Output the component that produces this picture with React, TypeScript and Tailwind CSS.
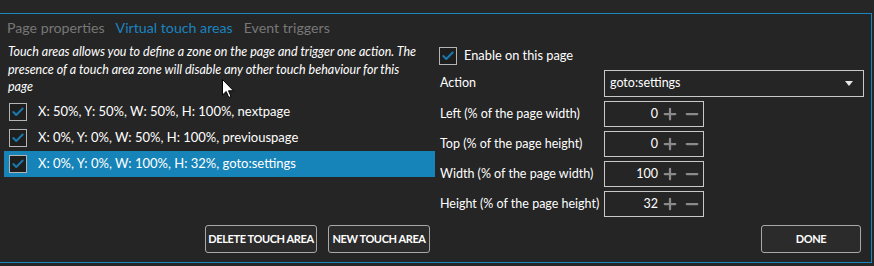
import { Check, Plus, Minus } from 'lucide-react';

const areas = [
  { label: 'X: 50%, Y: 50%, W: 50%, H: 100%, nextpage', selected: false },
  { label: 'X: 0%, Y: 0%, W: 50%, H: 100%, previouspage', selected: false },
  { label: 'X: 0%, Y: 0%, W: 100%, H: 32%, goto:settings', selected: true },
];

const fields = [
  { label: 'Left (% of the page width)', value: '0' },
  { label: 'Top (% of the page height)', value: '0' },
  { label: 'Width (% of the page width)', value: '100' },
  { label: 'Height (% of the page height)', value: '32' },
];

function CheckBox() {
  return (
    <span className="flex h-[18px] w-[18px] shrink-0 items-center justify-center border border-[#b4b4b4] bg-[#1e1e1e]">
      <Check size={14} strokeWidth={3.5} className="text-[#1a78ac]" />
    </span>
  );
}

function Button({ label, w }: { label: string; w: string }) {
  return (
    <button
      className={`${w} h-[28px] rounded-[3px] border border-[#a8a8a8] bg-[#2b2b2b] text-[11px] font-bold uppercase tracking-[-0.4px] text-white`}
    >
      {label}
    </button>
  );
}

export default function App() {
  return (
    <div
      className="relative h-[266px] w-[874px] overflow-hidden bg-[#262626] pt-[13px] text-white"
      style={{ fontFamily: 'Lato, "Open Sans", sans-serif' }}
    >
      <div className="flex h-[250px] w-[872px] border-t border-r border-b border-[#1c86bf] bg-[#252525]">
        {/* left column */}
        <div className="flex w-[436px] flex-col">
          <div className="mt-[3px] flex h-[22px] gap-[11px] whitespace-nowrap pl-[7px] text-[14.2px] leading-[22px]">
            <span className="text-[#777777]">Page properties</span>
            <span className="text-[#1b84c0]">Virtual touch areas</span>
            <span className="text-[#777777]">Event triggers</span>
          </div>

          <p className="mt-[4px] pl-[8px] pr-[10px] text-[12.5px] italic leading-[17.5px] text-white">
            Touch areas allows you to define a zone on the page and trigger one action. The presence of a touch area
            zone will disable any other touch behaviour for this page
          </p>

          <div className="mt-[3px] flex flex-col">
            {areas.map((a) => (
              <div
                key={a.label}
                className={`ml-[4px] mr-[1px] flex h-[26px] items-center gap-[11px] whitespace-nowrap pl-[5px] text-[13px] ${
                  a.selected ? 'bg-[#1784b9]' : ''
                }`}
              >
                <CheckBox />
                <span>{a.label}</span>
              </div>
            ))}
          </div>

          <div className="mt-auto mb-[9px] flex justify-end gap-[11px] pr-[6px]">
            <Button label="Delete touch area" w="w-[112px]" />
            <Button label="New touch area" w="w-[102px]" />
          </div>
        </div>

        {/* right column */}
        <div className="flex flex-1 flex-col whitespace-nowrap pt-[33px] text-[12.5px]">
          <div className="flex h-[17px] items-center gap-[7px] pl-[3px] text-[12.8px]">
            <CheckBox />
            <span>Enable on this page</span>
          </div>

          <div className="mt-[6px] flex items-center pl-[4px]">
            <span className="w-[164px]">Action</span>
            <div className="flex h-[27px] w-[260px] items-center justify-between border border-[#c8c8c8] pl-[5px] pr-[10px]">
              <span>goto:settings</span>
              <svg width="8" height="5" viewBox="0 0 8 5">
                <path d="M0 0H8L4 5Z" fill="#e8e8e8" />
              </svg>
            </div>
          </div>

          <div className="mt-[4px] flex flex-col gap-[4px]">
            {fields.map((f) => (
              <div key={f.label} className="flex items-center pl-[4px]">
                <span className="w-[164px]">{f.label}</span>
                <div className="flex h-[26px] w-[100px] items-center border border-[#c8c8c8]">
                  <span className="w-[53px] text-right">{f.value}</span>
                  <Plus size={18} strokeWidth={3} className="ml-[3px] text-[#8a8a8a]" />
                  <Minus size={18} strokeWidth={3} className="ml-[4px] text-[#8a8a8a]" />
                </div>
              </div>
            ))}
          </div>

          <div className="mt-auto mb-[9px] flex justify-end pr-[10px]">
            <Button label="Done" w="w-[100px]" />
          </div>
        </div>
      </div>

      {/* mouse pointer */}
      <svg className="absolute left-[222px] top-[79px]" width="13" height="20" viewBox="0 0 13 20">
        <path d="M0.5 0.5V16L4.2 12.5L6.8 18.5L9 17.5L6.5 11.8H11.5Z" fill="#ffffff" stroke="#000000" strokeWidth="1" />
      </svg>
    </div>
  );
}
